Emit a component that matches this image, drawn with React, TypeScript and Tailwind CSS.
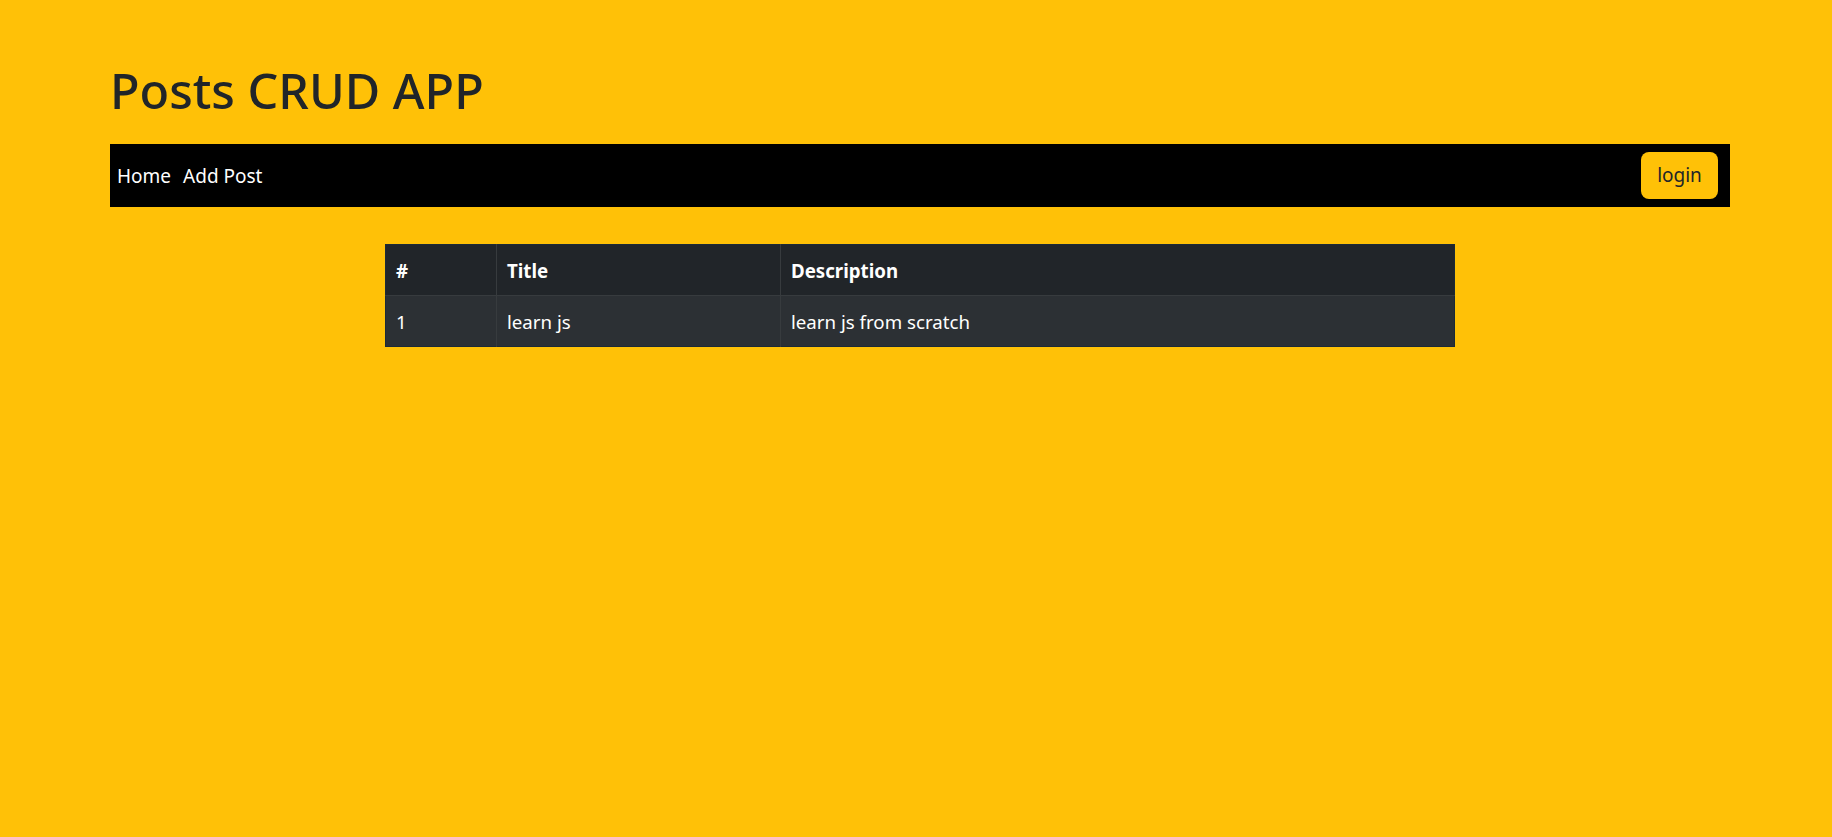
export default function App() {
  return (
    <div className="min-h-[837px] bg-[#ffc107] pl-[110px] pr-[102px] pt-[62px] font-['Noto_Sans','Open_Sans',sans-serif] text-[19px]">
      <h1 className="mb-[25px] text-[48.5px] leading-[57px] font-medium text-[#212529]">Posts CRUD APP</h1>

      {/* nav */}
      <nav className="flex h-[63px] items-center justify-between bg-black pl-[7px] pr-[12px]">
        <ul className="flex gap-[12px] pt-[2px] text-white">
          <li>Home</li>
          <li>Add Post</li>
        </ul>
        <button type="button" className="h-[47px] w-[77px] rounded-[8px] bg-[#ffc107] text-[#212529]">
          login
        </button>
      </nav>

      {/* posts table */}
      <div className="mt-[37px] flex justify-center">
        <table className="w-[1070px] table-fixed border-collapse border border-[#1b2a38] text-[18.7px] text-white">
          <thead>
            <tr className="h-[51px] border-b border-[#373b3e] bg-[#212529] font-bold">
              <th className="w-[111px] border-r border-[#373b3e] px-[10px] pt-[2px] text-left">#</th>
              <th className="w-[284px] border-r border-[#373b3e] px-[10px] pt-[2px] text-left">Title</th>
              <th className="px-[10px] pt-[2px] text-left">Description</th>
            </tr>
          </thead>
          <tbody>
            <tr className="h-[51px] bg-[#2c3034]">
              <td className="border-r border-[#373b3e] px-[10px] pt-[2px]">1</td>
              <td className="border-r border-[#373b3e] px-[10px] pt-[2px]">learn js</td>
              <td className="px-[10px] pt-[2px]">learn js from scratch</td>
            </tr>
          </tbody>
        </table>
      </div>
    </div>
  );
}
